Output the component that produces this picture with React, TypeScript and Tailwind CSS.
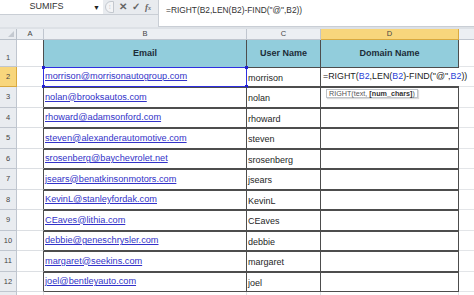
import React from "react";

const emails = [
  "morrison@morrisonautogroup.com",
  "nolan@brooksautos.com",
  "rhoward@adamsonford.com",
  "steven@alexanderautomotive.com",
  "srosenberg@baychevrolet.net",
  "jsears@benatkinsonmotors.com",
  "KevinL@stanleyfordak.com",
  "CEaves@lithia.com",
  "debbie@geneschrysler.com",
  "margaret@seekins.com",
  "joel@bentleyauto.com",
];
const users = [
  "morrison",
  "nolan",
  "rhoward",
  "steven",
  "srosenberg",
  "jsears",
  "KevinL",
  "CEaves",
  "debbie",
  "margaret",
  "joel",
];

function Formula() {
  return (
    <>
      =RIGHT(<span className="text-[#2a3fd6]">B2</span>,LEN(
      <span className="text-[#2a3fd6]">B2</span>)-FIND("@",
      <span className="text-[#2a3fd6]">B2</span>))
    </>
  );
}

export default function App() {
  return (
    <div className="w-[474px] h-[295px] overflow-hidden bg-white font-['Liberation_Sans',Arial,sans-serif] text-[#222]">
      {/* Formula bar */}
      <div className="flex h-[27px] bg-[#e8ebef]">
        <div className="flex flex-col w-[158px]">
          <div className="flex h-[15px] border-b border-[#c9ced5]">
            <div className="flex w-[103px] bg-white items-center">
              <div className="w-[93px] text-center text-[9px] text-[#333]">SUMIFS</div>
              <div className="w-[10px] text-[7px] text-[#222] leading-none">▼</div>
            </div>
            <div className="flex flex-1 items-center gap-[5px] pl-[2px]">
              <div className="w-[9px] h-[12px] rounded-l-full border border-[#c3c8cf] bg-[#f3f4f6] flex items-center justify-center text-[6px] text-[#aaa]">
                ⁝
              </div>
              <span className="text-[10px] text-[#666] leading-none font-bold">✕</span>
              <span className="text-[10px] text-[#666] leading-none font-bold">✓</span>
              <span className="text-[9px] text-[#666] leading-none italic font-['Liberation_Serif',serif] font-bold">
                f<span className="text-[6px]">x</span>
              </span>
            </div>
          </div>
        </div>
        <div className="flex-1 bg-white border-l border-[#c9ced5] border-b pl-[7px] pt-[4px] text-[8.4px] text-[#333] whitespace-nowrap">
          =RIGHT(B2,LEN(B2)-FIND("@",B2))
        </div>
      </div>
      <div className="h-[2px] bg-[#dde1e6]" />

      {/* Grid */}
      <div className="grid grid-cols-[17px_27px_203px_74px_138px_15px]">
        {/* Column headers */}
        <div className="h-[11px] bg-[#e9ecf0] border-r border-b border-[#b9c0c9] relative">
          <div className="absolute right-[2px] bottom-[2px] w-0 h-0 border-l-[6px] border-l-transparent border-b-[6px] border-b-[#c4c9d0]" />
        </div>
        {["A", "B", "C"].map((c) => (
          <div
            key={c}
            className="h-[11px] bg-[#eceff3] border-r border-b border-[#c0c6cf] text-[7.5px] text-[#444] flex items-center justify-center"
          >
            {c}
          </div>
        ))}
        <div className="h-[11px] bg-[#f8d67c] border-r border-b border-[#d9a93f] text-[7.5px] text-[#444] flex items-center justify-center">
          D
        </div>
        <div className="h-[11px] bg-[#eceff3] border-b border-[#c0c6cf]" />

        {/* Row 1 */}
        <div className="h-[27px] bg-[#e9ecf0] border-r border-b border-[#c0c6cf] text-[7.5px] text-[#444] flex items-end justify-center pb-[3px]">
          1
        </div>
        <div className="h-[27px] border-r border-b border-r-[#4d4d4d] border-b-[#dcdfe3]" />
        <div className="h-[27px] bg-[#92cddc] border-r border-[#4d4d4d] flex items-center justify-center text-[9px] font-bold text-[#1c2c38]">
          Email
        </div>
        <div className="h-[27px] bg-[#92cddc] border-r border-[#4d4d4d] flex items-center justify-center text-[9px] font-bold text-[#1c2c38]">
          User Name
        </div>
        <div className="h-[27px] bg-[#92cddc] border-r border-[#4d4d4d] flex items-center justify-center text-[9px] font-bold text-[#1c2c38]">
          Domain Name
        </div>
        <div className="h-[27px] border-b border-[#e3e5e8]" />

        {emails.map((e, i) => {
          const first = i === 0;
          const h = first ? "h-[20px]" : "h-[20.5px]";
          return (
            <React.Fragment key={e}>
              <div
                className={`${h} border-r border-b flex items-center justify-center text-[7.5px] text-[#444] ${
                  first
                    ? "bg-[#f8d67c] border-[#d9a93f]"
                    : "bg-[#e9ecf0] border-[#c0c6cf]"
                }`}
              >
                {i + 2}
              </div>
              <div className={`${h} border-r border-b border-r-[#4d4d4d] border-b-[#dcdfe3]`} />
              <div
                className={`${h} relative border-r border-t border-b border-[#4d4d4d] flex items-end pl-[1px] pb-[2px] text-[9.2px] text-[#3232c8] underline whitespace-nowrap`}
              >
                {e}
                {first && (
                  <div className="absolute -left-[1px] -top-[1px] -right-[1px] -bottom-[1px] border border-[#2f2fe0]">
                    <div className="absolute -left-[2px] -top-[2px] w-[3px] h-[3px] bg-[#2020d0]" />
                    <div className="absolute -left-[2px] -bottom-[2px] w-[3px] h-[3px] bg-[#2020d0]" />
                    <div className="absolute -right-[2px] -top-[2px] w-[3px] h-[3px] bg-[#2020d0]" />
                    <div className="absolute -right-[2px] -bottom-[2px] w-[3px] h-[3px] bg-[#2020d0]" />
                  </div>
                )}
              </div>
              <div
                className={`${h} border-r border-t border-b border-[#4d4d4d] flex items-end pl-[1px] pb-[1px] text-[9px] text-[#262626] whitespace-nowrap`}
              >
                {users[i]}
              </div>
              <div
                className={`${h} relative border-r border-t border-b border-[#4d4d4d] ${
                  first ? "z-10" : ""
                }`}
              >
                {first && (
                  <>
                    <div className="absolute left-[1px] top-0 bottom-0 right-[-14px] bg-white flex items-end pb-[3px] pl-[1px] text-[8.9px] text-[#222] whitespace-nowrap">
                      <Formula />
                    </div>
                    <div className="absolute left-[5px] top-[21px] h-[9px] px-[2px] bg-white border border-[#bfc3c8] text-[7.2px] leading-[8px] text-[#555] whitespace-nowrap shadow-[1px_1px_1px_rgba(0,0,0,0.15)]">
                      RIGHT(text, <b className="text-[#333]">[num_chars]</b>)
                    </div>
                  </>
                )}
              </div>
              <div className={`${h} border-b border-[#e3e5e8]`} />
            </React.Fragment>
          );
        })}

        {/* Row 13 partial */}
        <div className="h-[10px] bg-[#e9ecf0] border-r border-[#c0c6cf]" />
        <div className="h-[10px] border-r border-[#dcdfe3]" />
        <div className="h-[10px] border-r border-[#dcdfe3]" />
        <div className="h-[10px] border-r border-[#dcdfe3]" />
        <div className="h-[10px] border-r border-[#dcdfe3]" />
        <div className="h-[10px]" />
      </div>
    </div>
  );
}
